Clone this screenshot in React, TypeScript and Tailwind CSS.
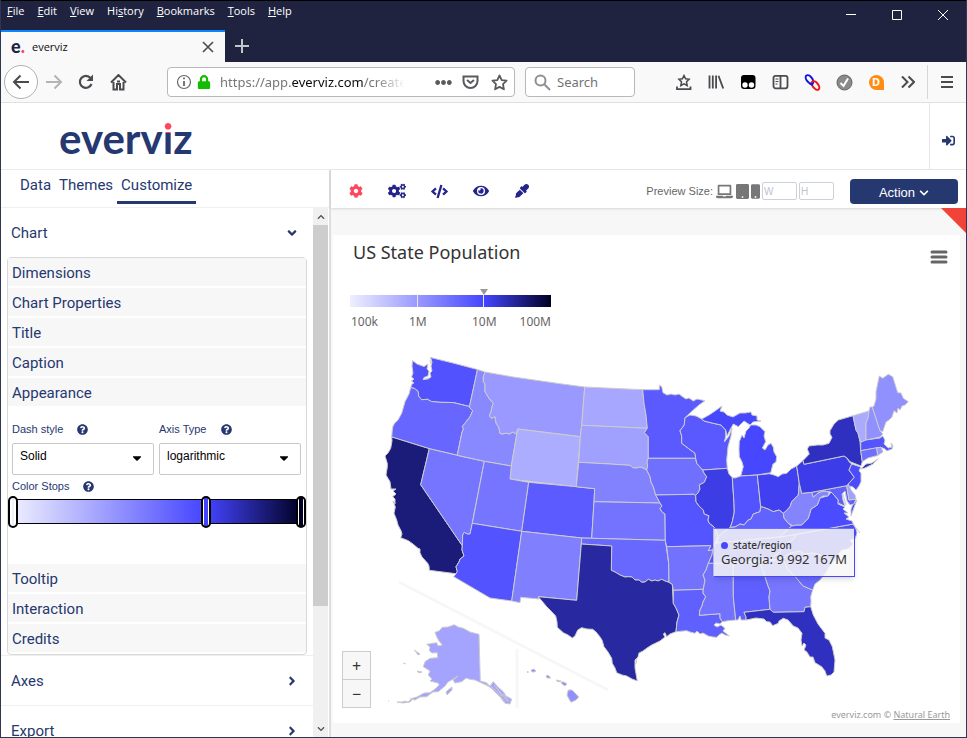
import React from "react";
import {
  FaAngleDown,
  FaAngleRight,
  FaCaretDown,
  FaChevronDown,
  FaChevronUp,
  FaCode,
  FaCog,
  FaCogs,
  FaEllipsisH,
  FaEye,
  FaEyeDropper,
  FaLaptop,
  FaLock,
  FaMobile,
  FaQuestionCircle,
  FaSignInAlt,
  FaTablet,
} from "react-icons/fa";

type Region = { name: string; fill: string; d: string };

// One polygon per state, Albers projection with Alaska and Hawaii as insets
const regions: Region[] = [
  { name: "Washington", fill: "#5252ff", d: "M412.5,360.5 417,364 424,366.5 428,364 427,369 429,371 428,376 424,377.5 423,379.5 428,379 431,377 430,373 432,371 431,366 432,362 430.5,357.5 453,363 477.5,369.5 469.5,406.5 453,402.5 440,402.3 431.5,401.5 427.5,399.3 421.5,399.7 418.5,396 418.3,391.7 414.3,388.3 410.7,387.7 412,384 414,383 411.5,381 414,379 411.5,377 413,373 412,366Z" },
  { name: "Oregon", fill: "#6767ff", d: "M410.7,387.7 414.3,388.3 418.3,391.7 418.5,396 421.5,399.7 427.5,399.3 431.5,401.5 440,402.3 453,402.5 469.5,406.5 470,408 472.7,410.7 470,416.7 462.3,426.7 463.5,429 462,432 457.3,455.3 429.3,448.7 391.7,437 392.3,430 393,426 395,422.7 398,420 401.7,413.3 405,401.7 409,394Z" },
  { name: "California", fill: "#1b1b7a", d: "M391.7,437 429.3,448.7 420.7,484.7 462.3,545.7 462,550 464,556 460,559 459,562 456,566.7 457.3,571.7 456,573.7 429.3,570.3 429,566 427.7,563.3 422,557 420,552.7 420,549 418,548.3 413.3,544.3 408.3,540.7 400.7,537.7 402,534 401,530.7 398,525 396.7,520 394,513.3 395.3,507 393,501 395,504 395,499 392.7,496.7 396,494 393,491 396,489 391,489 390,481.7 386,475 387.3,467 387.3,463.3 385,456 388,453 390.7,448.3 392,441Z" },
  { name: "Nevada", fill: "#7575ff", d: "M429.3,448.7 457.3,455.3 484.3,461.3 472.3,523.3 470,534 467,534 464.3,532.3 462.7,535 462.3,545.7 420.7,484.7Z" },
  { name: "Idaho", fill: "#8989ff", d: "M477.5,369.5 485,372 483.3,377 483.3,381.7 485,384 485,391.7 489,398.3 493.3,403.3 492,407 491,411.7 489.3,416 491.7,418.3 495,416.7 496,423 499,428 500,433.3 502,434 506.7,433 509,434 513,432 516,434 517.5,430 511.3,466 484.3,461.3 457.3,455.3 462,432 463.5,429 462.3,426.7 470,416.7 472.7,410.7 470,408 469.5,406.5Z" },
  { name: "Montana", fill: "#9999ff", d: "M485,372 513.3,377 560,383.7 584.7,387 581.7,425.3 580.3,436.7 517.7,429 516,434 513,432 509,434 506.7,433 502,434 500,433.3 499,428 496,423 495,416.7 491.7,418.3 489.3,416 491,411.7 492,407 493.3,403.3 489,398.3 485,391.7 485,384 483.3,381.7 483.3,377Z" },
  { name: "Wyoming", fill: "#adadff", d: "M517.7,429 580.3,436.7 576.3,486.7 510,479 511.3,466Z" },
  { name: "Utah", fill: "#7575ff", d: "M484.3,461.3 511.3,466 510,479 528.7,482.3 521.7,531.3 472.3,523.3Z" },
  { name: "Colorado", fill: "#5b5bff", d: "M528.7,482.3 576.3,486.7 594.7,488.7 594,501.7 591.7,538.3 581.7,538 521.7,531.3Z" },
  { name: "Arizona", fill: "#5353ff", d: "M472.3,523.3 521.7,531.3 511.7,601 490,598 453.7,576.7 456,573.7 457.3,571.7 456,566.7 459,562 460,559 464,556 462,550 462.3,545.7 462.7,535 464.3,532.3 467,534 470,534Z" },
  { name: "New Mexico", fill: "#8080ff", d: "M521.7,531.3 581.7,538 581.3,544 576.7,600.3 538.3,596.7 539,599 520.7,597.3 520,602.7 511.7,601Z" },
  { name: "North Dakota", fill: "#a7a7ff", d: "M584.7,387 642.7,389.7 644,403.3 646,415 647.3,428.3 581.7,425.3Z" },
  { name: "South Dakota", fill: "#a0a0ff", d: "M581.7,425.3 647.3,428.3 644.3,432.7 648.3,436.7 648.3,458.3 647,462 647.7,466 646.7,470 643,468 640,467 637,468 632.7,467.7 630,465.3 610,464 578.7,462.3 580.3,436.7Z" },
  { name: "Nebraska", fill: "#8282ff", d: "M578.7,462.3 610,464 630,465.3 632.7,467.7 637,468 640,467 643,468 646.7,470 650,476.7 651,482 653.3,486.7 655.7,495 660,503 594,501.7 594.7,488.7 576.3,486.7Z" },
  { name: "Kansas", fill: "#7373ff", d: "M594,501.7 660,503 662,506 660,508.3 662,512 665,514 665.3,540.3 591.7,538.3Z" },
  { name: "Oklahoma", fill: "#6868ff", d: "M581.7,538 591.7,538.3 665.3,540.3 668.7,563.3 669,582.3 665,581 661.7,579.3 658,581 655,580 652,581 648.3,579.3 645,582 641.7,582.3 639,580 635,580 632,577 628.3,576.7 625,577 620,575 615,572 611.3,570.3 611.7,546 581.3,544Z" },
  { name: "Texas", fill: "#2828a0", d: "M581.3,544 611.7,546 611.3,570.3 615,572 620,575 625,577 628.3,576.7 632,577 635,580 639,580 641.7,582.3 645,582 648.3,579.3 652,581 655,580 658,581 661.7,579.3 665,581 669,582.3 672.3,584.3 673.3,603.3 676,608 679,615 677,622 676,631.7 670,634 666.7,636.7 665,632.7 663.3,634 665,637 660,641 651.7,645 647,648 643,651 639,653 638,657 635,660 635,668 637.3,681 632,679 626.7,676 622,675 616.7,672.7 615,668 612.3,663.3 611.7,658.3 608,652 604,646.7 602,640 599.3,636 596,632 592.7,629.3 587,629 581.7,627.7 577.7,630 575,636 572.3,638 568,635 563.3,632.7 557.3,627.3 557,622 555.7,616 550,610 546.7,606.7 538.3,596.7 576.7,600.3Z" },
  { name: "Minnesota", fill: "#5a5aff", d: "M642.7,389.7 659.3,389.7 659.3,385.3 661.7,386.7 663,392.7 667,395 671,394 675,395 679,394 683.3,397.3 686,399 689,398 693.3,401 697,399 705,400.7 699,405 693.3,410 685,417.7 684.3,425 680,430.7 681.7,436 681.7,443.3 688.3,448.3 695,453.3 695.7,458.3 648.3,458.3 648.3,436.7 644.3,432.7 647.3,428.3 646,415 644,403.3Z" },
  { name: "Iowa", fill: "#7070ff", d: "M648.3,458.3 695.7,458.3 696.7,463.3 702.7,470 704,473 706.7,476.7 704.3,482.3 699.3,485 700,489 698,493 695.7,495.3 693.3,494.3 655.7,495 653.3,486.7 651,482 650,476.7 646.7,470 647.7,466 647,462Z" },
  { name: "Missouri", fill: "#5555ff", d: "M655.7,495 693.3,494.3 695.7,495.3 696,501.7 699,506 703.3,510 704.3,514 709,515.7 708,520 709.3,523.3 713,526 715,528.3 718.3,536.7 715,543.3 712.7,550 708.3,550.7 710.7,545.7 666.7,546.7 665.3,540.3 665,514 662,512 660,508.3 662,506 660,503Z" },
  { name: "Arkansas", fill: "#7272ff", d: "M666.7,546.7 710.7,545.7 708.3,550.7 712.7,550 712,555 708.3,563.3 706,570 703,575 705,580 703.3,589.3 673.3,590.3 672.3,584.3 669,582.3 668.7,563.3Z" },
  { name: "Louisiana", fill: "#6060ff", d: "M673.3,590.3 703.3,589.3 703,593 705.7,597 703,602 702,606 700,610 699.3,615.3 720,613.7 720,618 722.3,621.7 720,624 716,623 714,625 717,627 721,625 725,628.3 723,631 729.3,636 725,635 722,633 719,635 716.7,637.3 713,637 708.3,636 703,633 700,634 697,631 695,633.3 690,632 686.7,630.7 676,631.7 677,622 679,615 676,608 673.3,603.3Z" },
  { name: "Wisconsin", fill: "#5959ff", d: "M685,417.7 690,415 696,416 701.7,419 704,421 713.3,423.3 721,425 725.7,430 725.7,437 724.3,442 729,436 732,428 731,436 728,446.7 726.7,460 727.3,468.3 702.7,470 696.7,463.3 695.7,458.3 695,453.3 688.3,448.3 681.7,443.3 681.7,436 680,430.7 684.3,425Z" },
  { name: "Michigan (upper)", fill: "#4747ff", d: "M701.7,419 709,415 715,411 722,406 720,411 724,412 727,415 733,417 740,413 745,413 751,412 752,415 757,416 757,420 761,421 753,422 750,425 744,421 738.3,426.7 733.3,424 730,430 727,436 725.7,430 721,425 713.3,423.3 704,421Z" },
  { name: "Michigan", fill: "#4747ff", d: "M740.7,476 743.3,466.7 742,462 739.3,456.7 739,449 739.3,441.7 742,435 744,438 746,431 749,428 750.7,425 756,425 760,426.7 765,431.7 764,436 765.7,441.7 762.3,448 765,450 768,445 771,443.3 773.3,447.3 774,452 776.7,456.7 776,462 773,464 770.7,472.7 757.3,475Z" },
  { name: "Illinois", fill: "#3d3de6", d: "M702.7,470 727.3,468.3 729,474 732.3,477.7 734,503.3 734.3,512 732.3,521.7 730.3,527.3 727,530 723,532 718.3,536.7 715,528.3 713,526 709.3,523.3 708,520 709,515.7 704.3,514 703.3,510 699,506 696,501.7 695.7,495.3 698,493 700,489 699.3,485 704.3,482.3 706.7,476.7 704,473Z" },
  { name: "Indiana", fill: "#5353ff", d: "M732.3,477.7 735,478 741,476 757.3,475 760.7,506.7 760,511.7 753.3,514 751,519 748.3,520 744,525 740,524 735,527 730.3,527.3 732.3,521.7 734.3,512 734,503.3Z" },
  { name: "Ohio", fill: "#4040f0", d: "M757.3,475 769.3,473.7 774,475 778.3,476.7 782,474 786.7,473.3 791,469 796.7,466 799.3,483.3 798.3,495 791.7,501.7 790,506.7 786,511 783.3,513.3 779,510 773.3,511.7 768,509 763.3,507.3 760.7,506.7Z" },
  { name: "Kentucky", fill: "#6262ff", d: "M760.7,506.7 763.3,507.3 768,509 773.3,511.7 779,510 783.3,513.3 784,518 788.3,523.3 791.7,526 780,537 717,543 718.3,536.7 723,532 727,530 730.3,527.3 735,527 740,524 744,525 748.3,520 751,519 753.3,514 760,511.7Z" },
  { name: "Tennessee", fill: "#5959ff", d: "M717,543 780,537 796.7,534.3 793,540 786,544 780,552 770,560 733.3,563.3 708.3,563.3 712,555 712.7,550 715,543.3Z" },
  { name: "Mississippi", fill: "#7272ff", d: "M708.3,563.3 733.3,563.3 733.3,596.7 735.7,620 728.3,620.7 722.3,621.7 720,618 720,613.7 699.3,615.3 700,610 702,606 703,602 705.7,597 703,593 703.3,589.3 705,580 703,575 706,570Z" },
  { name: "Alabama", fill: "#5f5fff", d: "M733.3,563.3 760,562 768.3,586.7 770,591 769,597 770,609.3 744,612.3 746,616.7 746,620 741,620 740,616 738,620 735.7,620 733.3,596.7Z" },
  { name: "Georgia", fill: "#7676ff", d: "M760,562 781.7,559 785,563 787,568.3 796.7,578.3 803,586 812.7,590 810.7,596.7 811,601 810.7,606.7 805,607.3 804,611.7 773.3,612.3 770,609.3 769,597 770,591 768.3,586.7Z" },
  { name: "Florida", fill: "#3030c0", d: "M744,612.3 770,609.3 773.3,612.3 804,611.7 805,607.3 810.7,606.7 813.3,615 818,624 825,633.3 825,638 829,640 832.3,646.7 835,660 834,672 831,675 826.7,676 825,671 821.7,666.7 815,662.7 813,657 810,657 806.7,651.7 804,650 806,645 804,643 802,646 801,640 802,633.3 798,628 793.3,626 788,620 783.3,618.3 779,621 778.3,623.3 772.7,625.7 770,622 766.7,621.7 764,619 756,618 746,620 746,616.7Z" },
  { name: "South Carolina", fill: "#6b6bff", d: "M781.7,559 790,553 800,551 804,554 813,553 820,555 833.3,561.7 829,567 826.7,571.7 820,580 815,584 812.7,590 803,586 796.7,578.3 787,568.3 785,563Z" },
  { name: "North Carolina", fill: "#4c4cff", d: "M796.7,534.3 853.3,524 856,529 857,533 855,539 850,540 853,544 848,549 841.7,550 837,556 833.3,561.7 820,555 813,553 804,554 800,551 790,553 781.7,559 770,560 780,552 786,544 793,540Z" },
  { name: "Virginia", fill: "#4b4bff", d: "M791.7,526 796,525 801.7,525 808.3,518.3 811,509 817.3,505 820,498 828.3,495.7 831,492 834,495 838.3,500 838,504 845,507 843,509 848,513 844,513 849,517 846,519 852,521 853.3,524 796.7,534.3 780,537Z" },
  { name: "Virginia shore", fill: "#4b4bff", d: "M857,500 855,505 851,516 851,509 853,504Z" },
  { name: "West Virginia", fill: "#8484ff", d: "M799.3,483.3 801.7,493.3 811.7,492.3 813.3,497 818,493 823,491 829,492 828,496 823,496 820,498 817.3,505 811,509 808.3,518.3 801.7,525 796,525 793.3,526 788.3,523.3 784,518 783.3,513.3 786,511 790,506.7 791.7,501.7 798.3,495Z" },
  { name: "Maryland", fill: "#6060ff", d: "M811.7,492.3 846.7,485.7 849,500 856,499 854,504 850,505 847,501 845,491 842,494 843,500 845,506 838,503 838.3,500 834,495 831,492 823,491 818,493 813.3,497Z" },
  { name: "Delaware", fill: "#a0a0ff", d: "M846.7,485.7 849,485 851,490 855,495 856,499 849,500Z" },
  { name: "Pennsylvania", fill: "#3c3ce8", d: "M796.7,466 803,460.5 804,464.3 844,456 847,458 849,461.7 851.7,464 849,470 854.3,477.3 848.3,484 846.7,485.7 811.7,492.3 801.7,493.3 799.3,483.3Z" },
  { name: "New Jersey", fill: "#4b4bff", d: "M851.7,464 860.7,467 859,471 861,473 861,481.7 859,486 856,490 853,487 849,486 848.3,484 854.3,477.3 849,470Z" },
  { name: "New York", fill: "#3030c0", d: "M804,464.3 803,460.5 809.3,454 807.3,449 809,446 817.3,445 823,445 829,443.3 832,437.3 830,434 830,430.7 834,424 838.3,420 853,415.7 856,430 858,433 860,441.7 860.7,450.7 862.3,461.7 861,466 850,461.7 847,458 844,456Z" },
  { name: "Long Island", fill: "#3030c0", d: "M860.7,469 866,464 872,463 878,459 873,464 865,468Z" },
  { name: "Vermont", fill: "#aaaaff", d: "M853,415.7 869,411 868,418 866,423 866,440 860.7,442.3 858,433 856,430Z" },
  { name: "New Hampshire", fill: "#9090ff", d: "M869,411 870,407 872.3,407 880,430.7 882.7,434 880,437 866,440 866,423 868,418Z" },
  { name: "Maine", fill: "#9090ff", d: "M872.3,407 874,406 876,399 876,391.7 879.3,376 882.7,378.3 888.3,374.3 892.7,376.7 897.7,392.7 901,393 903.3,398.3 908.3,401.7 905,405 902,406 900,410 898,408 897,413 894,410.7 892,417 889,420 886,422 882.7,431.7 880,430.7Z" },
  { name: "Massachusetts", fill: "#5555ff", d: "M860.7,442.3 866,440 880,438 882.7,436 885,440 884,444 888.3,448 892,447 891,443 893,446 892,449 886.7,451 885,449 881,447.3 860.7,450.7Z" },
  { name: "Connecticut", fill: "#7070ff", d: "M860.7,450.7 876.7,447.7 877.7,455.5 868,458 862.3,461.7Z" },
  { name: "Rhode Island", fill: "#9999ff", d: "M876.7,447.7 881,447.3 883,452 877.7,455.5Z" },
  { name: "Alaska", fill: "#a4a4ff", d: "M435,632.3 439,631 442.3,627.3 448,627 454.3,624.7 458,627 463.3,628.3 470,632 479,634.3 480.3,681 486.7,682.7 490,686 493.3,681.7 498,687 503.3,691.7 506,696 511.7,699 510,704 505,703.3 500,697 495,692 491.7,688.3 486,685 480,682.3 475,680 470,679.3 466,678 461.7,681.7 455,683 453,680 458,676 455,678 448,682 445,686 438.3,691.7 433,692 426.7,696.7 420,697 415,700 410,699 417,697 424,693 430,692.7 435,689 439.3,685 438,683 430,681 432,679 428.3,675 430,671 423.3,666.7 425,661.7 430,658.3 437.7,657.7 437.3,652.7 432,653 429.3,650.7 430,647 426.7,644.3 436.7,642.7 438,646 442.3,645 439,641 436.7,636.7Z" },
  { name: "Kodiak", fill: "#a4a4ff", d: "M446,692 448,690 452,687 452,690 447,695Z" },
  { name: "Aleutians", fill: "#a4a4ff", d: "M397,702 402,702 405,701 408,702 410,700 413,699 410,702 403,703Z" },
  { name: "Bering", fill: "#a4a4ff", d: "M414,650 417,652 420,654 418,655 416,652ZM417,671 422,672 419,673Z" },
  { name: "Hawaii", fill: "#9090ff", d: "M568.3,690 572,690 575,693 578.7,697 576,700 571,702.3 569,699 567,695Z" },
  { name: "Maui", fill: "#9090ff", d: "M561,682 564,682 567,684 565,686 562,684ZM556,680 561,681 558,682ZM546,676 548,675 551,678 547,678Z" },
  { name: "Kauai", fill: "#9090ff", d: "M531,670 534,669 536,671 534,672 532,672ZM527,672 528,671 528,673Z" },
];

// fjords and sounds drawn as border-coloured strokes only
const coastDetail =
  "M486,683 491,688 496,693M490,685 497,692 505,702M494,685 500,692 508,702M496,687 502,696M503,694 509,701M388,701 389,701M403,663 406,664M843,494 846,505M853,524 860,533M430,360 431,364M425,379 429,378M637,658 636,664";

const sections = ["Dimensions", "Chart Properties", "Title", "Caption", "Appearance"];
const lowerSections = ["Tooltip", "Interaction", "Credits"];
const menus = [
  ["", "F", "ile"],
  ["", "E", "dit"],
  ["", "V", "iew"],
  ["Hi", "s", "tory"],
  ["", "B", "ookmarks"],
  ["", "T", "ools"],
  ["", "H", "elp"],
];

const ToolButton = ({ label, children }: { label: string; children: React.ReactNode }) => (
  <button aria-label={label} className="flex h-8 w-8 shrink-0 items-center justify-center text-[#4a4a4f]">
    {children}
  </button>
);

const BrowserTop = () => (
  <div className="border-t border-black bg-[#202340] font-['Open_Sans','Noto_Sans',sans-serif]">
    <div className="flex h-[29px] items-start justify-between">
      <nav className="flex gap-[13px] pt-px pl-1.5 text-[11px] leading-[18px] font-medium text-white">
        {menus.map(([before, key, after]) => (
          <button key={key + after}>
            {before}
            <span className="underline">{key}</span>
            {after}
          </button>
        ))}
      </nav>
      <div className="flex text-white">
        <button aria-label="Minimize" className="flex h-7 w-[46px] items-center justify-center">
          <svg width="10" height="10" stroke="currentColor"><path d="M0 4.5h10" /></svg>
        </button>
        <button aria-label="Maximize" className="flex h-7 w-[46px] items-center justify-center">
          <svg width="10" height="10" stroke="currentColor" fill="none"><path d="M.5.5h9v9h-9z" /></svg>
        </button>
        <button aria-label="Close" className="flex h-7 w-[46px] items-center justify-center">
          <svg width="10" height="10" stroke="currentColor"><path d="M0 0l10 10M10 0L0 10" /></svg>
        </button>
      </div>
    </div>
    <div className="flex h-8">
      <div className="flex w-56 items-center border-t-2 border-[#0a84ff] bg-[#f9f9fa] pr-2.5 pl-2.5 text-[#0c0c0d]">
        <span className="w-[21px] pb-0.5 font-['Lato',sans-serif] text-lg leading-4 font-black text-[#202340]">
          e<span className="text-[#ff4660]">.</span>
        </span>
        <span className="flex-1 text-[11px]">everviz</span>
        <button aria-label="Close tab">
          <svg width="14" height="14" viewBox="0 0 14 14" stroke="#4a4a4f" strokeWidth="1.6"><path d="M2 2l10 10M12 2L2 12" /></svg>
        </button>
      </div>
      <button aria-label="New tab" className="flex w-[34px] items-center justify-center">
        <svg width="14" height="14" stroke="#c5c5cc" strokeWidth="2"><path d="M7 0v14M0 7h14" /></svg>
      </button>
    </div>
  </div>
);

const BrowserBar = () => (
  <div className="flex h-[41px] items-center border-b border-[#e0e0e1] bg-[#f9f9fa] pl-[3px] font-['Noto_Sans','Open_Sans',sans-serif]">
    <button aria-label="Back" className="flex size-[34px] items-center justify-center rounded-full border border-[#b1b1b3] bg-white">
      <svg width="18" height="16" viewBox="0 0 18 16" fill="none" stroke="#4a4a4f" strokeWidth="2"><path d="M17 8H2M8.500 1.500L2 8l6.500 6.500" /></svg>
    </button>
    <ToolButton label="Forward">
      <svg width="18" height="16" viewBox="0 0 18 16" fill="none" stroke="#b4b4b6" strokeWidth="2"><path d="M1 8h15M9.500 1.500L16 8l-6.500 6.500" /></svg>
    </ToolButton>
    <ToolButton label="Reload">
      <svg width="16" height="16" viewBox="0 0 16 16" fill="none" stroke="currentColor" strokeWidth="2.200"><path d="M13.500 10A6 6 0 1 1 12.500 4" /><path d="M15 .5v6.500H8.500z" fill="currentColor" stroke="none" /></svg>
    </ToolButton>
    <ToolButton label="Home">
      <svg width="17" height="17" viewBox="0 0 17 17" fill="none" stroke="currentColor" strokeWidth="2"><path d="M1 8.500L8.500 1 16 8.500M3.500 8v7.500h3.500V10h3v5.500h3.500V8" /><path d="M7 7.500h3" /></svg>
    </ToolButton>
    <div className="ml-[33px] flex h-[30px] w-[348px] items-center rounded-sm border border-[#b8b8ba] bg-white pr-1.5 pl-2">
      <svg className="shrink-0" width="16" height="16" viewBox="0 0 16 16" fill="none" stroke="#6a6a6d" strokeWidth="1.200"><circle cx="8" cy="8" r="6.500" /><path d="M8 7v5M8 3.500v1.800" strokeWidth="1.800" /></svg>
      <FaLock className="ml-[5px] shrink-0 text-[#12bc00]" size={14} />
      <div className="ml-[9px] [mask-image:linear-gradient(to_right,#000_156px,transparent_185px)] pt-0.5 text-[13px] whitespace-nowrap text-[#777]">
        https://app.<span className="text-[#0c0c0d]">everviz.com</span>/create
      </div>
      <FaEllipsisH className="mr-2.5 ml-auto shrink-0 text-[#5a5a5e]" size={17} />
      <svg className="mr-3 shrink-0" width="17" height="16" viewBox="0 0 17 16" fill="none" stroke="#5a5a5e" strokeWidth="2"><path d="M1.500 2.500h14V7a7 7 0 0 1-14 0z" /><path d="M5 6l3.500 3L12 6" /></svg>
      <svg className="shrink-0" width="17" height="17" viewBox="0 0 17 17" fill="none" stroke="#5a5a5e" strokeWidth="1.800" strokeLinejoin="round"><path d="M8.500 1.500l2.200 4.600 4.900.6-3.600 3.500.9 5.100-4.400-2.400-4.400 2.400.9-5.100L1.400 6.700l4.900-.6z" /></svg>
    </div>
    <label className="ml-2.5 flex h-[30px] w-[110px] items-center rounded-sm border border-[#b8b8ba] bg-white pl-2">
      <svg className="shrink-0" width="17" height="17" viewBox="0 0 17 17" fill="none" stroke="#8f8f92" strokeWidth="2"><circle cx="6.500" cy="6.500" r="5" /><path d="M10 10l6 6" /></svg>
      <input aria-label="Search" placeholder="Search" className="ml-1.5 w-full min-w-0 pt-0.5 text-[13px] outline-none placeholder:text-[#737373]" />
    </label>
    <div className="ml-auto flex items-center">
      <ToolButton label="Bookmarks">
        <svg width="16" height="17" viewBox="0 0 16 17" fill="none" stroke="currentColor" strokeWidth="1.500"><path d="M8 1.500l1.600 3.300 3.500.5-2.600 2.500.7 3.700L8 9.800l-3.200 1.700.7-3.700-2.600-2.500 3.500-.5z" /><path d="M1 12.500v2.700h13.500v-2.700" strokeWidth="1.800" /></svg>
      </ToolButton>
      <ToolButton label="Library">
        <svg width="16" height="16" viewBox="0 0 16 16" stroke="currentColor" strokeWidth="1.800"><path d="M1.500 1.500v13M4.800 1.500v13M8.100 1.500v13M10.500 1.700l4.700 12.800" /></svg>
      </ToolButton>
      <ToolButton label="Extension">
        <svg width="16" height="16" viewBox="0 0 16 16"><rect x="1" y="1" width="14.500" height="14" rx="3" fill="#000" /><circle cx="5" cy="11" r="2.700" fill="#fff" /><circle cx="11.500" cy="11" r="2.700" fill="#fff" /></svg>
      </ToolButton>
      <ToolButton label="Sidebars">
        <svg width="17" height="16" viewBox="0 0 17 16" fill="none" stroke="currentColor" strokeWidth="1.800"><rect x="1.500" y="1.800" width="14" height="12.500" rx="2" /><path d="M8.500 2v12" /><path d="M3.500 5h3M3.500 7.500h3M3.500 10h2" strokeWidth="1" /></svg>
      </ToolButton>
      <ToolButton label="Links">
        <svg width="17" height="17" viewBox="0 0 17 17" fill="none" strokeWidth="2"><ellipse cx="5.500" cy="5.500" rx="2.800" ry="5" stroke="#1414e0" transform="rotate(-38 5.500 5.500)" /><ellipse cx="11.500" cy="11.500" rx="2.800" ry="5" stroke="#f01414" transform="rotate(-38 11.500 11.500)" /><path d="M6 9.500l3 1.500" stroke="#1414e0" /></svg>
      </ToolButton>
      <ToolButton label="Checker">
        <svg width="17" height="17" viewBox="0 0 17 17"><circle cx="8.500" cy="8.500" r="7.500" fill="#8a8a8a" stroke="#636363" /><path d="M4.500 9l3 3L12 4.500" fill="none" stroke="#fff" strokeWidth="2" /></svg>
      </ToolButton>
      <ToolButton label="Deals">
        <span className="flex size-[15px] items-center justify-center rounded-full rounded-br-none bg-[#ff8c12] text-[11px] font-bold text-white">D</span>
      </ToolButton>
      <ToolButton label="More tools">
        <svg width="14" height="14" viewBox="0 0 14 14" fill="none" stroke="currentColor" strokeWidth="2"><path d="M1 1.500L6.500 7 1 12.500M7.500 1.500L13 7l-5.500 5.500" /></svg>
      </ToolButton>
      <div className="ml-[3px] flex h-[34px] items-center border-l border-[#d7d7db] px-[3px]">
        <ToolButton label="Open menu">
          <svg width="12" height="12" stroke="currentColor" strokeWidth="2"><path d="M0 1h12M0 6h12M0 11h12" /></svg>
        </ToolButton>
      </div>
    </div>
  </div>
);

const SectionRow = ({ title }: { title: string }) => (
  <button className="block h-7 w-full bg-[#f7f7f7] pt-px pl-1 text-left text-[15px] leading-7 text-[#25386f]">
    {title}
  </button>
);

const SelectField = ({ id, label, value }: { id: string; label: string; value: string }) => (
  <div className="flex-1 font-['Liberation_Sans',Arial,sans-serif]">
    <div className="flex h-4 items-center gap-3.5">
      <label htmlFor={id} className="text-[11px] text-[#25386f]">{label}</label>
      <FaQuestionCircle size={11} />
    </div>
    <div className="relative mt-1.5">
      <select id={id} className="h-8 w-full appearance-none rounded-xs border border-[#c8c8c8] bg-white pb-1.5 pl-[7px] text-xs text-black">
        <option>{value}</option>
      </select>
      <FaCaretDown size={14} className="pointer-events-none absolute top-2 right-2.5 text-black" />
    </div>
  </div>
);

const colorStops = [
  { value: 0, thumb: "[&::-webkit-slider-thumb]:bg-[linear-gradient(to_right,#fff_2px,#efefff_2px,#efefff_4px,#fff_4px)]" },
  { value: 67, thumb: "[&::-webkit-slider-thumb]:bg-[linear-gradient(to_right,#fff_1px,#4444ff_1px,#4444ff_5px,#fff_5px)]" },
  { value: 100, thumb: "[&::-webkit-slider-thumb]:bg-[linear-gradient(to_right,#fff_1px,#000022_1px,#000022_5px,#fff_5px)]" },
];

const ColorStops = () => (
  <div className="mt-0.5 py-[3px]">
    <div className="relative">
      <div className="mx-1 h-[25px] border-y border-black bg-[linear-gradient(to_right,#efefff,#4444ff_67%,#000022)]" />
      {colorStops.map((stop) => (
        <input
          key={stop.value}
          type="range"
          aria-label={`Color stop ${stop.value}`}
          defaultValue={stop.value}
          className={`pointer-events-none absolute inset-x-0 top-0 h-[25px] w-full appearance-none bg-transparent [&::-webkit-slider-thumb]:pointer-events-auto [&::-webkit-slider-thumb]:h-8 [&::-webkit-slider-thumb]:w-2.5 [&::-webkit-slider-thumb]:appearance-none [&::-webkit-slider-thumb]:rounded-full [&::-webkit-slider-thumb]:border-2 [&::-webkit-slider-thumb]:border-black ${stop.thumb}`}
        />
      ))}
    </div>
  </div>
);

const Sidebar = () => (
  <aside className="flex w-[330px] shrink-0 flex-col border-r-2 border-[#dedede] font-['Roboto','Liberation_Sans',sans-serif] text-[#25386f]">
    <nav className="flex h-[38px] shrink-0 gap-1 border-b border-[#efefef] pl-[19px] text-[15px]">
      <a href="#data" className="pt-1 pr-1">Data</a>
      <a href="#themes" className="pt-1">Themes</a>
      <a href="#customize" className="h-[34px] border-b-[3px] border-[#25386f] px-1 pt-1">Customize</a>
    </nav>
    <div className="flex min-h-0 flex-1">
      <div className="min-w-0 flex-1 overflow-hidden">
        <button className="flex h-[49px] w-full items-center justify-between pt-px pr-3.5 pl-2.5 text-[15px]">
          Chart <FaAngleDown size={14} />
        </button>
        <div className="mr-1.5 ml-1.5 rounded-sm border border-[#d8d8d8]">
          <div className="flex flex-col gap-0.5">
            {sections.map((title) => (
              <SectionRow key={title} title={title} />
            ))}
          </div>
          <div className="h-[158px] pt-[15px]">
            <div className="flex gap-[5px] pr-[5px] pl-1">
              <SelectField id="dash" label="Dash style" value="Solid" />
              <SelectField id="axis" label="Axis Type" value="logarithmic" />
            </div>
            <div className="mt-[3px] flex h-4 items-center gap-3.5 pl-1 font-['Liberation_Sans',Arial,sans-serif] text-[11px]">
              Color Stops <FaQuestionCircle size={11} />
            </div>
            <ColorStops />
          </div>
          <div className="flex flex-col gap-0.5 pb-0.5">
            {lowerSections.map((title) => (
              <SectionRow key={title} title={title} />
            ))}
          </div>
        </div>
        {["Axes", "Export"].map((title) => (
          <button key={title} className="flex h-[50px] w-full items-center justify-between border-t border-[#efefef] pt-px pr-3.5 pl-2.5 text-[15px]">
            {title} <FaAngleRight size={14} />
          </button>
        ))}
      </div>
      <div className="mr-px flex w-[15px] shrink-0 flex-col items-center justify-between bg-[#f0f0f0] text-[#505050]">
        <div className="flex h-[17px] items-center"><FaChevronUp size={8} /></div>
        <div className="w-full flex-1">
          <div className="h-[77%] bg-[#cdcdcd]" />
        </div>
        <div className="flex h-[17px] items-center"><FaChevronDown size={8} /></div>
      </div>
    </div>
  </aside>
);

const ChartToolbar = () => (
  <div className="flex h-[38px] shrink-0 items-center bg-white pt-1 pr-2 shadow-sm">
    <div className="flex flex-1 items-center pl-[18px] text-[#24248a]">
      <button aria-label="Settings" className="w-[39px] text-[#ff4660]"><FaCog size={14} /></button>
      <button aria-label="Advanced" className="w-[43px]"><FaCogs size={18} /></button>
      <button aria-label="Code" className="w-[42px]"><FaCode size={17} /></button>
      <button aria-label="Preview" className="w-[42px]"><FaEye size={16} /></button>
      <button aria-label="Style"><FaEyeDropper size={14} /></button>
    </div>
    <span className="text-[11px] text-[#666]">Preview Size:</span>
    <button aria-label="Laptop" className="ml-[3px] text-[#777]"><FaLaptop size={17} /></button>
    <button aria-label="Tablet" className="ml-[3px] text-[#777]"><FaTablet className="h-[15px] w-[13px]" /></button>
    <button aria-label="Phone" className="ml-0.5 text-[#777]"><FaMobile className="h-[15px] w-[9px]" /></button>
    <input aria-label="Width" placeholder="W" className="ml-0.5 h-[18px] w-[35px] rounded-xs border border-[#ccd0da] px-px text-[10px] placeholder:text-[#bcc3cf]" />
    <input aria-label="Height" placeholder="H" className="ml-0.5 h-[18px] w-[35px] rounded-xs border border-[#ccd0da] px-px text-[10px] placeholder:text-[#bcc3cf]" />
    <button className="ml-4 flex h-[25px] w-[108px] items-center justify-center gap-1 rounded-sm bg-[#25386f] pt-1 text-[13px] text-white">
      Action <FaChevronDown size={10} />
    </button>
  </div>
);

const Legend = () => (
  <svg width="220" height="46" viewBox="345 285 220 46" className="ml-3" fontSize="12" fill="#666">
    <defs>
      <linearGradient id="scale">
        <stop offset="0" stopColor="#efefff" />
        <stop offset="0.670" stopColor="#4444ff" />
        <stop offset="1" stopColor="#000022" />
      </linearGradient>
    </defs>
    <rect x="350" y="295" width="201" height="12" fill="url(#scale)" />
    <path d="M417.500 295v12M483.500 295v12" stroke="#e6e6e6" />
    <path d="M480 289h8l-4 6z" fill="#999" />
    <text x="351" y="326">100k</text>
    <text x="409" y="326">1M</text>
    <text x="472" y="326">10M</text>
    <text x="551" y="326" textAnchor="end">100M</text>
  </svg>
);

const StateMap = () => (
  <svg viewBox="333 340 627 383" className="block w-full" role="img" aria-label="US states by population">
    <path d="M399 582L608 690M517 649V708" stroke="#f7f7f7" strokeWidth="3" />
    <g stroke="#cccccc" strokeWidth="1" strokeLinejoin="round">
      {regions.map((region) => (
        <path key={region.name} d={region.d} fill={region.fill} />
      ))}
      <path d={coastDetail} fill="none" />
    </g>
  </svg>
);

const ChartCard = () => (
  <div className="relative mt-[27px] mr-1.5 ml-0.5 bg-white font-['Noto_Sans','Open_Sans',sans-serif]">
    <div className="flex h-[50px] items-start justify-between pt-[5px] pr-3 pl-5">
      <h1 className="text-lg leading-6 text-[#333]">US State Population</h1>
      <button aria-label="Chart menu" className="pt-2.5">
        <svg width="18" height="14" stroke="#666" strokeWidth="3" strokeLinecap="round"><path d="M2 2h14M2 7h14M2 12h14" /></svg>
      </button>
    </div>
    <Legend />
    <div className="pt-[9px]">
      <StateMap />
    </div>
    <div className="absolute top-[293px] left-[380px] border border-[#4747ff] border-t-[#6f6fff] border-l-[#b5b5ef] bg-[#f7f7f7]/85 px-[7px] pt-2 pb-2.5 text-[#333] shadow-md">
      <div className="flex items-center gap-[5px] text-[10px] leading-4 font-medium">
        <span className="size-[7px] rounded-full bg-[#4747ff]" />
        state/region
      </div>
      <div className="text-[13px] leading-[13px] whitespace-nowrap">Georgia: 9 992 167M</div>
    </div>
    <div className="absolute bottom-[15px] left-[9px] flex flex-col text-base text-[#333]">
      <button className="size-[29px] border border-[#ccc] bg-[#f7f7f7]">+</button>
      <button className="-mt-px size-[29px] border border-[#ccc] bg-[#f7f7f7]">−</button>
    </div>
    <div className="absolute right-2.5 bottom-0.5 text-[9px] leading-3 text-[#999]">
      everviz.com © <a href="#natural-earth" className="underline">Natural Earth</a>
    </div>
  </div>
);

const App = () => {
  return (
    <div className="flex h-screen flex-col overflow-hidden border-r border-b border-l border-[#2f3850] bg-white font-['Liberation_Sans',Arial,sans-serif]">
      <BrowserTop />
      <BrowserBar />
      <header className="flex h-[67px] shrink-0 items-stretch justify-between border-b border-[#eaeaea]">
        <div className="pt-2 pl-[58px] font-['Lato',sans-serif] text-[42px] leading-[54px] font-bold text-[#25386f]">
          everv
          <span className="bg-[linear-gradient(#ff4660_40%,#25386f_40%)] bg-clip-text text-transparent">i</span>z
        </div>
        <button aria-label="Sign in" className="flex w-[37px] items-center justify-center border-l border-[#e8e8e8] pt-2 text-[#25386f]">
          <FaSignInAlt size={13} />
        </button>
      </header>
      <div className="flex min-h-0 flex-1">
        <Sidebar />
        <main className="relative flex min-w-0 flex-1 flex-col bg-[#f7f7f7]">
          <ChartToolbar />
          <div className="absolute top-[38px] right-0 size-[25px] bg-[#f04438] [clip-path:polygon(0_0,100%_0,100%_100%)]" />
          <ChartCard />
        </main>
      </div>
    </div>
  );
};

export default App;
